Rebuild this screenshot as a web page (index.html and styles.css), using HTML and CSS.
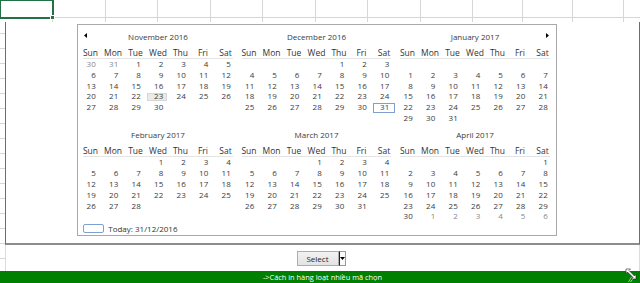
FILE: index.html
```html
<!DOCTYPE html>
<html>
<head>
<meta charset="utf-8">
<link rel="stylesheet" href="styles.css">
</head>
<body>
<div class="sheet-top">
  <div class="col w53"></div><div class="col w53"></div><div class="col w52"></div><div class="col w53"></div><div class="col w52"></div><div class="col w53"></div><div class="col w52"></div><div class="col w53"></div><div class="col w52"></div><div class="col w50"></div><div class="col w50"></div><div class="col w51"></div><div class="col rest"></div>
  <div class="cellsel"></div>
  <div class="handle"></div>
</div>
<div class="sheet-mid">
  <div class="strip"></div>
  <div class="form">
    <div class="frame">
      <div class="cal">
        <div class="months">
          <div class="month">
            <div class="mtitle"><span class="arrow"><svg width="3" height="5" viewBox="0 0 3 5"><polygon points="3,0 0,2.5 3,5" fill="#000"/></svg></span><span>November 2016</span><span></span></div>
            <div class="dow"><span>Sun</span><span>Mon</span><span>Tue</span><span>Wed</span><span>Thu</span><span>Fri</span><span>Sat</span></div>
            <div class="days">
              <span class="g">30</span><span class="g">31</span><span>1</span><span>2</span><span>3</span><span>4</span><span>5</span>
              <span>6</span><span>7</span><span>8</span><span>9</span><span>10</span><span>11</span><span>12</span>
              <span>13</span><span>14</span><span>15</span><span>16</span><span>17</span><span>18</span><span>19</span>
              <span>20</span><span>21</span><span>22</span><span class="sd">23</span><span>24</span><span>25</span><span>26</span>
              <span>27</span><span>28</span><span>29</span><span>30</span>
            </div>
          </div>
          <div class="month">
            <div class="mtitle"><span></span><span>December 2016</span><span></span></div>
            <div class="dow"><span>Sun</span><span>Mon</span><span>Tue</span><span>Wed</span><span>Thu</span><span>Fri</span><span>Sat</span></div>
            <div class="days">
              <span></span><span></span><span></span><span></span><span>1</span><span>2</span><span>3</span>
              <span>4</span><span>5</span><span>6</span><span>7</span><span>8</span><span>9</span><span>10</span>
              <span>11</span><span>12</span><span>13</span><span>14</span><span>15</span><span>16</span><span>17</span>
              <span>18</span><span>19</span><span>20</span><span>21</span><span>22</span><span>23</span><span>24</span>
              <span>25</span><span>26</span><span>27</span><span>28</span><span>29</span><span>30</span><span class="td">31</span>
            </div>
          </div>
          <div class="month">
            <div class="mtitle"><span></span><span>January 2017</span><span class="arrow"><svg width="3" height="5" viewBox="0 0 3 5"><polygon points="0,0 3,2.5 0,5" fill="#000"/></svg></span></div>
            <div class="dow"><span>Sun</span><span>Mon</span><span>Tue</span><span>Wed</span><span>Thu</span><span>Fri</span><span>Sat</span></div>
            <div class="days">
              <span></span><span></span><span></span><span></span><span></span><span></span><span></span>
              <span>1</span><span>2</span><span>3</span><span>4</span><span>5</span><span>6</span><span>7</span>
              <span>8</span><span>9</span><span>10</span><span>11</span><span>12</span><span>13</span><span>14</span>
              <span>15</span><span>16</span><span>17</span><span>18</span><span>19</span><span>20</span><span>21</span>
              <span>22</span><span>23</span><span>24</span><span>25</span><span>26</span><span>27</span><span>28</span>
              <span>29</span><span>30</span><span>31</span>
            </div>
          </div>
          <div class="month">
            <div class="mtitle"><span></span><span>February 2017</span><span></span></div>
            <div class="dow"><span>Sun</span><span>Mon</span><span>Tue</span><span>Wed</span><span>Thu</span><span>Fri</span><span>Sat</span></div>
            <div class="days">
              <span></span><span></span><span></span><span>1</span><span>2</span><span>3</span><span>4</span>
              <span>5</span><span>6</span><span>7</span><span>8</span><span>9</span><span>10</span><span>11</span>
              <span>12</span><span>13</span><span>14</span><span>15</span><span>16</span><span>17</span><span>18</span>
              <span>19</span><span>20</span><span>21</span><span>22</span><span>23</span><span>24</span><span>25</span>
              <span>26</span><span>27</span><span>28</span>
            </div>
          </div>
          <div class="month">
            <div class="mtitle"><span></span><span>March 2017</span><span></span></div>
            <div class="dow"><span>Sun</span><span>Mon</span><span>Tue</span><span>Wed</span><span>Thu</span><span>Fri</span><span>Sat</span></div>
            <div class="days">
              <span></span><span></span><span></span><span>1</span><span>2</span><span>3</span><span>4</span>
              <span>5</span><span>6</span><span>7</span><span>8</span><span>9</span><span>10</span><span>11</span>
              <span>12</span><span>13</span><span>14</span><span>15</span><span>16</span><span>17</span><span>18</span>
              <span>19</span><span>20</span><span>21</span><span>22</span><span>23</span><span>24</span><span>25</span>
              <span>26</span><span>27</span><span>28</span><span>29</span><span>30</span><span>31</span>
            </div>
          </div>
          <div class="month">
            <div class="mtitle"><span></span><span>April 2017</span><span></span></div>
            <div class="dow"><span>Sun</span><span>Mon</span><span>Tue</span><span>Wed</span><span>Thu</span><span>Fri</span><span>Sat</span></div>
            <div class="days">
              <span></span><span></span><span></span><span></span><span></span><span></span><span>1</span>
              <span>2</span><span>3</span><span>4</span><span>5</span><span>6</span><span>7</span><span>8</span>
              <span>9</span><span>10</span><span>11</span><span>12</span><span>13</span><span>14</span><span>15</span>
              <span>16</span><span>17</span><span>18</span><span>19</span><span>20</span><span>21</span><span>22</span>
              <span>23</span><span>24</span><span>25</span><span>26</span><span>27</span><span>28</span><span>29</span>
              <span>30</span><span class="g">1</span><span class="g">2</span><span class="g">3</span><span class="g">4</span><span class="g">5</span><span class="g">6</span>
            </div>
          </div>
        </div>
        <div class="today"><span class="tbox"></span><span>Today: 31/12/2016</span></div>
      </div>
    </div>
    <div class="actions">
      <div class="combo">
        <div class="btn">Select</div>
        <div class="dd"><svg width="5" height="3" viewBox="0 0 5 3"><polygon points="0,0 5,0 2.5,3" fill="#000"/></svg></div>
      </div>
    </div>
  </div>
</div>
<div class="status">-&gt;Cách in hàng loạt nhiều mã chọn</div>
<svg class="cursor" width="13" height="14" viewBox="0 0 13 14">
  <line x1="3.5" y1="14" x2="6.5" y2="9" stroke="#b8e0a0" stroke-width="0.8"/>
  <line x1="5.5" y1="14" x2="8.5" y2="10" stroke="#e8f0a0" stroke-width="0.8"/>
  <path d="M1,1 L5.5,1 L4,2.5 L9.5,8 L11,6.5 L11,11 L6.5,11 L8,9.5 L2.5,4 L1,5.5 Z" fill="#fff" stroke="#222" stroke-width="0.6"/>
</svg>
</body>
</html>
```

FILE: styles.css
```css
* { box-sizing: border-box; }
html, body { margin: 0; padding: 0; }
body {
  position: relative;
  width: 640px;
  height: 283px;
  overflow: hidden;
  background: #fff;
  font-family: "Open Sans", "Noto Sans", sans-serif;
  color: #3a3a3a;
}

/* Excel sheet behind the form */
.sheet-top {
  position: relative;
  display: flex;
  height: 22px;
  background: linear-gradient(#d6d6d6, #d6d6d6) 0 17px / 100% 1px no-repeat;
}
.col { flex: none; border-right: 1px solid #d6d6d6; }
.w53 { width: 53px; }
.w52 { width: 52px; }
.w51 { width: 51px; }
.w50 { width: 50px; }
.rest { flex: 1; border-right: none; }
.cellsel {
  position: absolute;
  left: -1px;
  top: 0;
  width: 55px;
  height: 19px;
  border: 2px solid #217346;
  border-top-width: 1px;
}
.handle {
  position: absolute;
  left: 50px;
  top: 15px;
  width: 5px;
  height: 5px;
  background: #217346;
  border: 1px solid #fff;
}

.sheet-mid { display: flex; height: 249px; }
.strip {
  width: 5px;
  flex: none;
  background: linear-gradient(to bottom, #d6d6d6 0 1px, transparent 1px 15px) 0 11px / 100% 15px repeat-y;
}
.form { width: 635px; display: flex; flex-direction: column; }
.frame {
  height: 223px;
  border-left: 1px solid #6d6d6d;
  border-right: 1px solid #6d6d6d;
  border-bottom: 2px solid #8c8c8c;
  padding: 2px 0 0 71px;
  background: #fff;
}

/* Month calendar */
.cal {
  width: 480px;
  height: 212px;
  border: 1px solid #a9a9a9;
  padding: 3px 0 0 1.25px;
  background: #fff;
}
.months {
  display: grid;
  grid-template-columns: repeat(3, 157.5px);
  grid-auto-rows: 98.4px;
  column-gap: 1px;
}
.mtitle {
  display: grid;
  grid-template-columns: 12px 1fr 12px;
  height: 17px;
  line-height: 17px;
  font-size: 8px;
  text-align: center;
  color: #3a3a3a;
}
.arrow {
  display: flex;
  align-items: center;
  justify-content: center;
  margin-top: -2px;
}
.arrow svg { display: block; }
.dow {
  display: grid;
  grid-template-columns: repeat(7, 22.5px);
  margin-top: 3px;
  height: 11px;
  line-height: 10px;
  font-size: 8.5px;
  text-align: center;
  color: #333;
  background: linear-gradient(#e4e4e4, #e4e4e4) 4px 10px / calc(100% - 8px) 1px no-repeat;
}
.days {
  display: grid;
  grid-template-columns: repeat(7, 22.5px);
  grid-auto-rows: 10.8px;
  line-height: 10.8px;
  font-size: 8px;
  text-align: right;
  color: #3b3b3b;
}
.days span { position: relative; z-index: 0; padding-right: 6px; }
.days .g { color: #888; }
.days .sd::before {
  content: "";
  position: absolute;
  inset: 1.2px 2.6px 1.2px 0.4px;
  background: #eaeaea;
  border: 1px solid #d6d6d6;
  z-index: -1;
}
.days .td::before {
  content: "";
  position: absolute;
  inset: 0.5px 0.3px 0.3px 0.6px;
  border: 1px solid #7f9fcf;
  z-index: -1;
}
.today {
  display: flex;
  align-items: center;
  height: 9px;
  margin-top: -1px;
  padding-left: 4px;
  font-size: 8px;
  color: #333;
}
.tbox {
  width: 21px;
  height: 8.5px;
  border: 1px solid #7f9fcf;
  border-radius: 2px;
  margin-right: 4px;
}

/* bottom action row */
.actions {
  height: 26px;
  border-left: 1px solid #dcdcdc;
  border-right: 1px solid #dcdcdc;
  padding: 5.7px 0 0 290.5px;
  display: flex;
  align-items: flex-start;
}
.combo { display: flex; height: 15px; }
.btn {
  width: 42px;
  border: 1px solid #adadad;
  background: linear-gradient(#f2f2f2, #e3e3e3);
  font-size: 8px;
  line-height: 13px;
  text-align: center;
  color: #1e1e1e;
}
.dd {
  width: 7px;
  border: 1px solid #9a9a9a;
  border-left: 1px solid #222;
  background: #fafafa;
  display: flex;
  align-items: center;
  justify-content: center;
}
.dd svg { display: block; }

.status {
  height: 12px;
  background: #008000;
  color: #fff;
  font-size: 7.4px;
  line-height: 12px;
  text-align: center;
  padding-left: 5px;
  white-space: nowrap;
}
.cursor {
  position: absolute;
  left: 625px;
  top: 268px;
}
```
